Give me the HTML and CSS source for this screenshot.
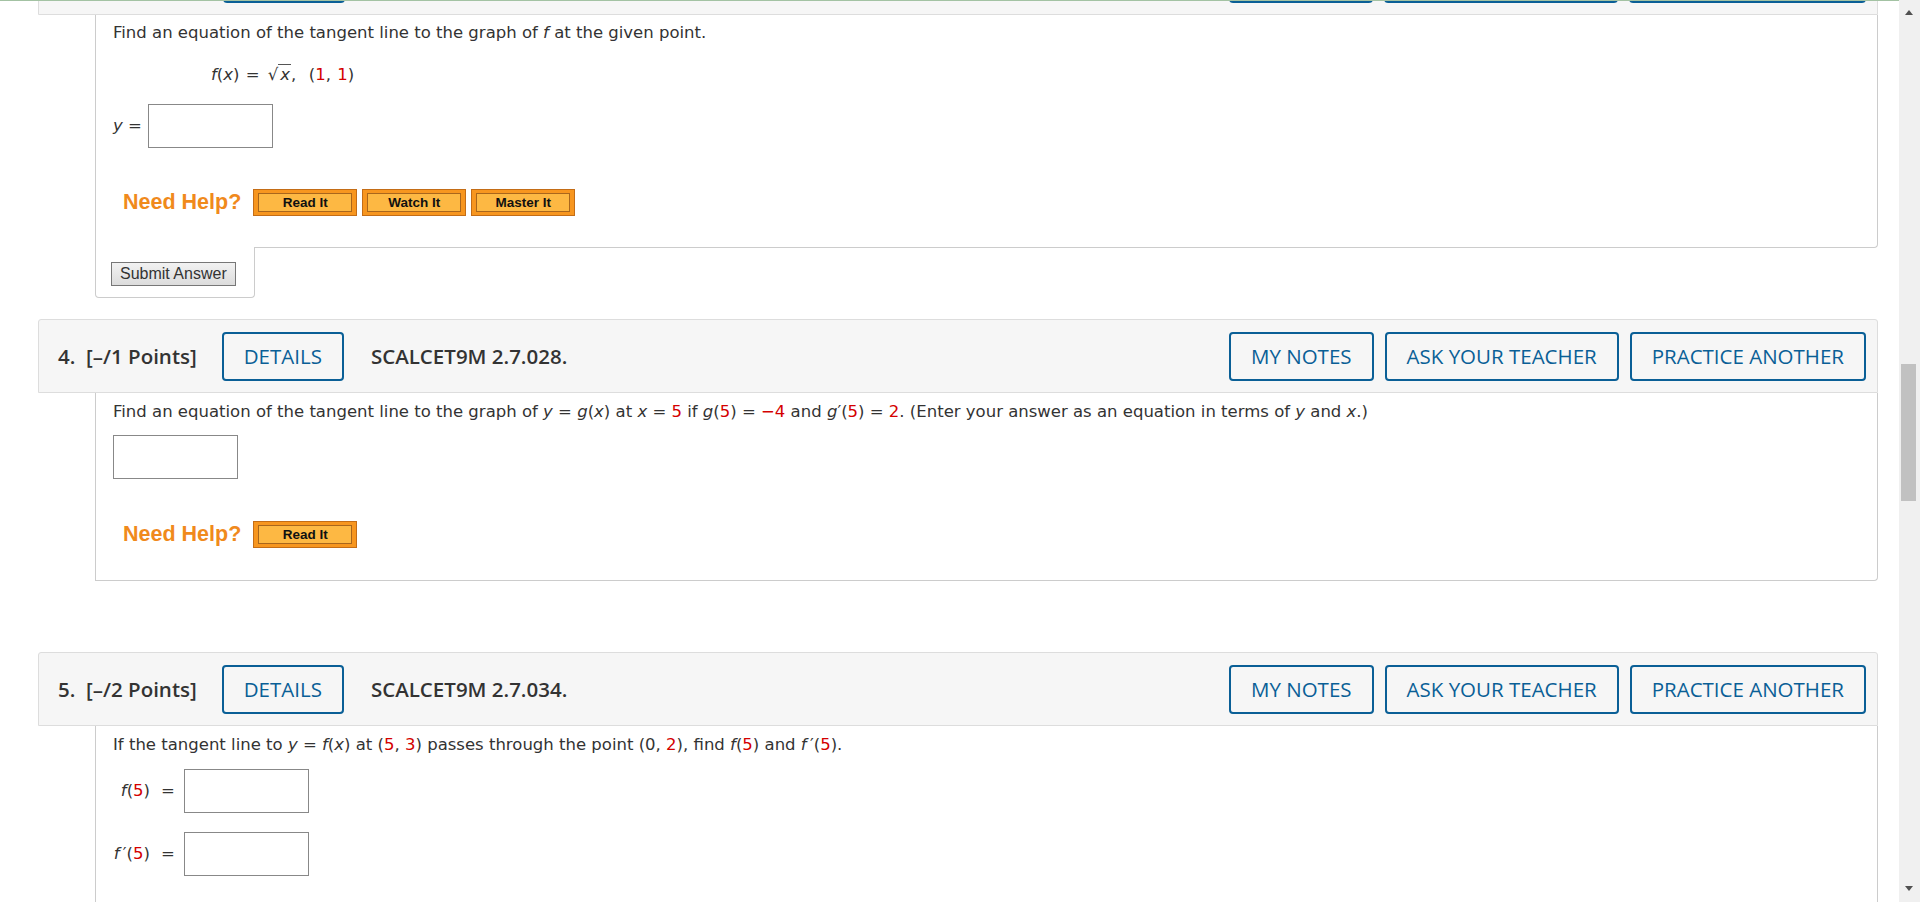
FILE: index.html
```html
<!DOCTYPE html>
<html lang="en">

<head>
    <meta charset="UTF-8">
    <meta name="viewport" content="width=device-width, initial-scale=1.0">
    <title>Assignment</title>
    <link rel="stylesheet" href="styles.css">
</head>

<body>
    <div class="screen">
        <div class="page">
            <!-- question 3, scrolled mostly out of view: only the bottom of its header shows -->
            <div class="question q-cut">
                <div class="qhead">
                    <span class="qnum blank" style="width: 140px"></span>
                    <span class="hbtn details blank" style="width: 122px"></span>
                    <span class="qcode blank" style="width: 193px"></span>
                    <div class="hright">
                        <span class="hbtn blank" style="width: 144px"></span>
                        <span class="hbtn blank" style="width: 234px"></span>
                        <span class="hbtn blank" style="width: 237px"></span>
                    </div>
                </div>
                <div class="qbody">
                    <p class="qtext">Find an equation of the tangent line to the graph of <i>f</i> at the given point.</p>
                    <p class="formula"><i>f</i>(<i>x</i>) = <span class="sqrt">√<span class="rad"><i>x</i></span></span>,&nbsp; (<span class="red">1</span>, <span class="red">1</span>)</p>
                    <div class="ansrow">
                        <span class="lbl"><i>y</i> =</span>
                        <input type="text" class="ans">
                    </div>
                    <div class="help">
                        <span class="need">Need Help?</span>
                        <a href="javascript:;" class="hb"><span>Read It</span></a>
                        <a href="javascript:;" class="hb"><span>Watch It</span></a>
                        <a href="javascript:;" class="hb"><span>Master It</span></a>
                    </div>
                </div>
                <div class="submit-tab">
                    <button class="submit">Submit Answer</button>
                </div>
            </div>

            <div class="question">
                <div class="qhead">
                    <span class="qnum">4.&nbsp; [–/1 Points]</span>
                    <a href="javascript:;" class="hbtn details">DETAILS</a>
                    <span class="qcode">SCALCET9M 2.7.028.</span>
                    <div class="hright">
                        <a href="javascript:;" class="hbtn">MY NOTES</a>
                        <a href="javascript:;" class="hbtn">ASK YOUR TEACHER</a>
                        <a href="javascript:;" class="hbtn">PRACTICE ANOTHER</a>
                    </div>
                </div>
                <div class="qbody q4">
                    <p class="qtext">Find an equation of the tangent line to the graph of <i>y</i> = <i>g</i>(<i>x</i>) at <i>x</i> = <span class="red">5</span> if <i>g</i>(<span class="red">5</span>) = <span class="red">−4</span> and <i>g</i>′(<span class="red">5</span>) = <span class="red">2</span>. (Enter your answer as an equation in terms of <i>y</i> and <i>x</i>.)</p>
                    <input type="text" class="ans solo">
                    <div class="help">
                        <span class="need">Need Help?</span>
                        <a href="javascript:;" class="hb"><span>Read It</span></a>
                    </div>
                </div>
                <div class="tab-space"></div>
            </div>

            <div class="question">
                <div class="qhead">
                    <span class="qnum">5.&nbsp; [–/2 Points]</span>
                    <a href="javascript:;" class="hbtn details">DETAILS</a>
                    <span class="qcode">SCALCET9M 2.7.034.</span>
                    <div class="hright">
                        <a href="javascript:;" class="hbtn">MY NOTES</a>
                        <a href="javascript:;" class="hbtn">ASK YOUR TEACHER</a>
                        <a href="javascript:;" class="hbtn">PRACTICE ANOTHER</a>
                    </div>
                </div>
                <div class="qbody q5">
                    <p class="qtext">If the tangent line to <i>y</i> = <i>f</i>(<i>x</i>) at (<span class="red">5</span>, <span class="red">3</span>) passes through the point (0, <span class="red">2</span>), find <i>f</i>(<span class="red">5</span>) and <i>f</i>&#8201;′(<span class="red">5</span>).</p>
                    <div class="pairs">
                        <span class="plbl"><i>f</i>(<span class="red">5</span>)</span>
                        <span class="eq">=</span>
                        <input type="text" class="ans">
                        <span class="plbl"><i>f</i>&#8201;′(<span class="red">5</span>)</span>
                        <span class="eq">=</span>
                        <input type="text" class="ans">
                    </div>
                </div>
            </div>
        </div>
        <div class="scrollbar">
            <div class="arrow-up"></div>
            <div class="thumb"></div>
            <div class="track"></div>
            <div class="arrow-down"></div>
        </div>
    </div>
</body>

</html>
```

FILE: styles.css
```css
* {
    box-sizing: border-box;
}

body {
    margin: 0;
    background: #fff;
    color: #333;
    font-family: "DejaVu Sans", Verdana, sans-serif;
}

.screen {
    display: flex;
    height: 902px;
    overflow: hidden;
}

.page {
    flex: 1;
    border-top: 1px solid #a3c2a3;
    overflow: hidden;
    padding: 0 21px 0 38px;
}

.question {
    margin-bottom: 21px;
}

.q-cut .qhead {
    margin-top: -60px;
}

/* question header bar */
.qhead {
    display: flex;
    align-items: center;
    height: 74px;
    padding: 0 11px 0 19px;
    background: #f6f6f6;
    border: 1px solid #ddd;
    border-radius: 3px 3px 0 0;
    font-family: "Open Sans", sans-serif;
    font-size: 20.5px;
}

.qnum,
.qcode {
    font-weight: 600;
    color: #333;
}

.qcode {
    margin-left: 27px;
}

.hbtn {
    display: block;
    height: 49px;
    line-height: 45px;
    padding: 0 20px;
    border: 2px solid #0a5f96;
    border-radius: 4px;
    color: #0a5f96;
    text-decoration: none;
    font-size: 20.5px;
    white-space: nowrap;
}

.blank {
    display: block;
    flex: none;
}

.details {
    margin-left: 25px;
}

.hright {
    display: flex;
    gap: 11px;
    margin-left: auto;
}

/* question body */
.qbody {
    margin-left: 57px;
    padding: 8px 17px 31px;
    border: 1px solid #ccc;
    border-top: none;
    border-radius: 0 0 4px 0;
    background: #fff;
    font-size: 16.5px;
    line-height: 20px;
}

.q4 {
    padding: 9px 17px 32px;
}

.q5 {
    padding: 9px 17px 60px;
    border-bottom: none;
}

.qtext {
    margin: 0;
}

.red {
    color: #d40000;
}

.formula {
    margin: 22px 0 0 98px;
    word-spacing: 1px;
}

.sqrt {
    margin-left: 2px;
}

.rad {
    border-top: 1px solid #555;
    padding: 0 1px 0 2px;
}

.ansrow {
    display: flex;
    align-items: center;
    margin-top: 19px;
}

.lbl {
    margin-right: 6px;
}

.ans {
    display: block;
    width: 125px;
    height: 44px;
    border: 1px solid #888;
    margin: 0;
}

.solo {
    margin-top: 13px;
}

/* need help row */
.help {
    display: flex;
    align-items: center;
    margin-top: 41px;
    padding-left: 10px;
}

.q4 .help {
    margin-top: 42px;
}

.need {
    margin-right: 12px;
    color: #f08a1c;
    font: bold 21.5px "Liberation Sans", Arial, sans-serif;
}

.hb {
    display: block;
    width: 104px;
    height: 27px;
    margin-right: 5px;
    padding: 3px 4px;
    background: #f7961f;
    border: 1px solid #c46d16;
    text-decoration: none;
}

.hb span {
    display: block;
    height: 19px;
    border: 1px solid #a9661c;
    background: #fdb843;
    color: #111;
    text-align: center;
    font: bold 13.5px/17px "Liberation Sans", Arial, sans-serif;
}

/* submit tab under the body */
.submit-tab {
    width: 160px;
    height: 51px;
    margin: -1px 0 0 57px;
    padding: 15px 0 0 15px;
    background: #fff;
    border: 1px solid #ccc;
    border-top: none;
    border-radius: 0 0 4px 4px;
}

.submit {
    display: block;
    height: 24px;
    padding: 0 8px;
    border: 1px solid #777;
    background: linear-gradient(#f2f2f2, #dcdcdc);
    color: #333;
    font: 16px/20px "Liberation Sans", Arial, sans-serif;
}

.tab-space {
    height: 50px;
}

/* f(5) = / f'(5) = table */
.pairs {
    display: grid;
    grid-template-columns: 37px 12px 125px;
    align-items: center;
    column-gap: 11px;
    row-gap: 19px;
    margin-top: 14px;
    justify-content: start;
}

.plbl {
    text-align: right;
    white-space: nowrap;
}

/* fake scrollbar */
.scrollbar {
    width: 21px;
    background: #f0f0f0;
    display: flex;
    flex-direction: column;
}

.arrow-up {
    height: 20px;
    padding-top: 10px;
}

.arrow-up::before,
.arrow-down::before {
    content: "";
    display: block;
    width: 0;
    margin-left: 6px;
    border-left: 4.5px solid transparent;
    border-right: 4.5px solid transparent;
}

.arrow-up::before {
    border-bottom: 5px solid #505050;
}

.arrow-down::before {
    border-top: 5px solid #505050;
}

.arrow-down {
    height: 16px;
}

.thumb {
    height: 137px;
    margin: 344px 4px 0 2px;
    background: #c1c1c1;
}

.track {
    flex: 1;
}
```
